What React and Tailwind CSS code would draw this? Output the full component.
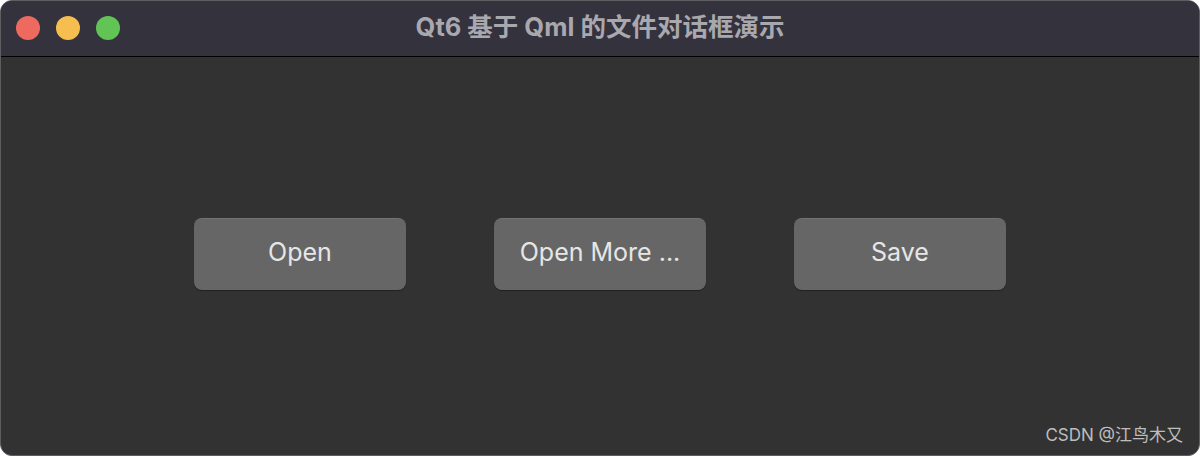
export default function App() {
  const buttons = ['Open', 'Open More ...', 'Save'];

  return (
    <div className="h-[456px] w-[1200px] bg-white" style={{ fontFamily: 'Inter, "Noto Sans CJK SC", sans-serif' }}>
      <div className="flex h-full w-full flex-col overflow-hidden rounded-[12px] border border-[#5e5e62] bg-[#323232]">
        {/* title bar */}
        <div className="relative flex h-[56px] shrink-0 items-center border-b border-black bg-[#34323d] px-[15px] pb-[1px]">
          <div className="flex gap-[16px]">
            <span className="h-[24px] w-[24px] rounded-full bg-[#ee6a5f]" />
            <span className="h-[24px] w-[24px] rounded-full bg-[#f5be4f]" />
            <span className="h-[24px] w-[24px] rounded-full bg-[#61c454]" />
          </div>
          <div className="absolute inset-0 flex items-center justify-center pb-[2px] text-[25.5px] font-bold text-[#a9a8ae]">
            Qt6 基于 Qml 的文件对话框演示
          </div>
        </div>

        {/* content */}
        <div className="relative flex flex-1 items-center justify-center gap-[88px] pb-[5px]">
          {buttons.map((label) => (
            <button
              key={label}
              type="button"
              className="flex h-[72px] w-[212px] items-center justify-center rounded-[8px] border-t border-[#727272] bg-[#666666] pb-[3px] text-[25px] text-[#e6e6e6] shadow-[0_1px_1px_rgba(0,0,0,0.35)]"
            >
              {label}
            </button>
          ))}
          <div className="absolute bottom-[7px] right-[16px] text-[17px] text-[#bdbdbd]">
            CSDN @江鸟木又
          </div>
        </div>
      </div>
    </div>
  );
}
